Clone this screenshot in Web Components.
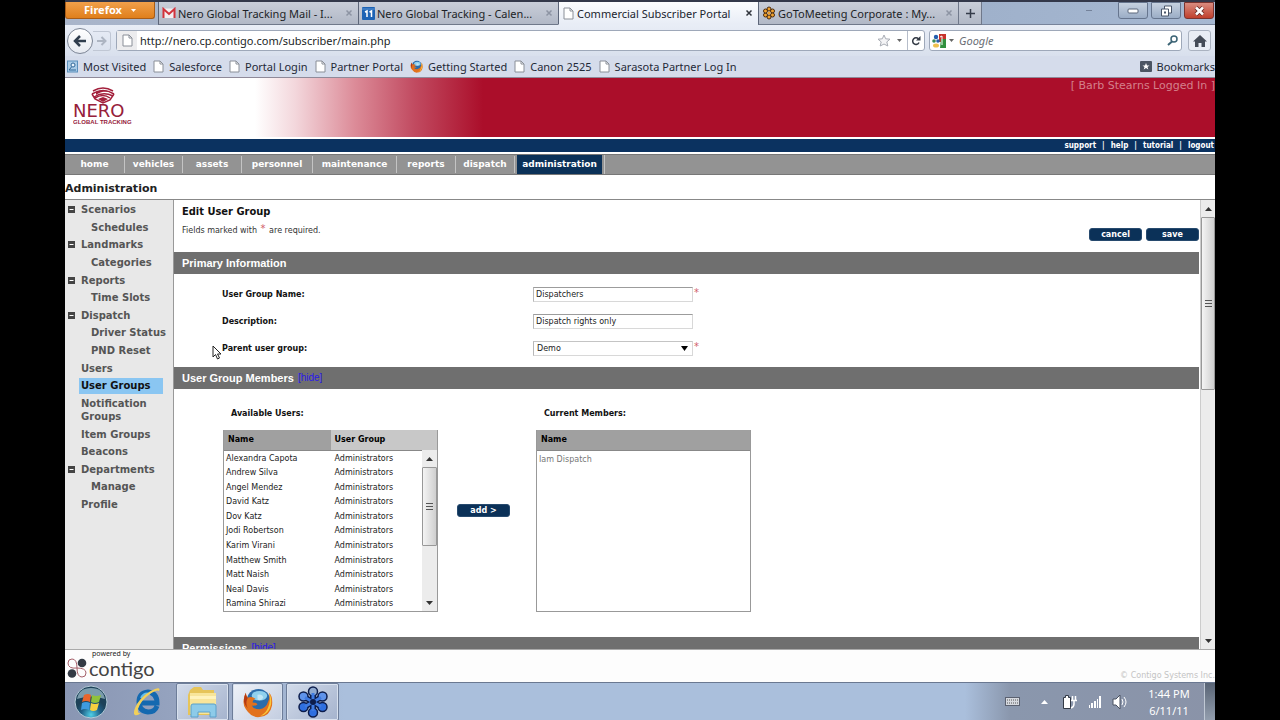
<!DOCTYPE html>
<html lang="en">
<head>
<meta charset="utf-8">
<title>Commercial Subscriber Portal</title>
<style>
html, body { margin: 0; height: 100%; background: #000; }
body { font-family: "Noto Sans", "Open Sans", sans-serif; font-size: 11px; color: #1c1f26; }
</style>
</head>
<body>
<desktop-screen></desktop-screen>

<script>
const icons = {
  page: '<svg width="11" height="13" viewBox="0 0 11 13"><path d="M1 1h6l3 3v8H1z" fill="#fff" stroke="#8a8f98"/><path d="M7 1v3h3" fill="none" stroke="#8a8f98"/></svg>',
  mail: '<svg width="14" height="12" viewBox="0 0 14 12"><path d="M1 1.500h12v9.500H1z" fill="#f3eef0"/><path d="M1.500 11V2L7 7l5.500-5v9" fill="none" stroke="#d2333c" stroke-width="2"/></svg>',
  cal: '<svg width="13" height="13" viewBox="0 0 13 13"><rect width="13" height="13" rx="1" fill="#1c62b4"/><path d="M0 2h13" stroke="#5c95d4"/><path d="M3 5l2-1v6M7.500 5l2-1v6" fill="none" stroke="#fff" stroke-width="1.500"/></svg>',
  flower: '<svg width="14" height="14" viewBox="0 0 14 14"><g fill="#f0a12c" stroke="#4a2b10"><circle cx="7" cy="3" r="2"/><circle cx="10.500" cy="5" r="2"/><circle cx="10.500" cy="9" r="2"/><circle cx="7" cy="11" r="2"/><circle cx="3.500" cy="9" r="2"/><circle cx="3.500" cy="5" r="2"/></g><circle cx="7" cy="7" r="1.500" fill="#f0a12c"/></svg>',
  visited: '<svg width="11" height="13" viewBox="0 0 11 13"><rect x=".5" y="1" width="10" height="11" fill="#a9cbe6" stroke="#5a8fbc"/><circle cx="6" cy="5" r="2" fill="#e9f4fc" stroke="#2d6698"/><path d="M4.500 7L2 10h7" fill="none" stroke="#2d6698"/></svg>',
  firefox: '<svg width="SZ" height="SZ" viewBox="0 0 32 32"><circle cx="17" cy="14" r="12" fill="#2b6cab"/><ellipse cx="18" cy="9" rx="8" ry="5" fill="#8fd0ee"/><path d="M16 8q5-1 6 3-3 4-6 2z" fill="#d6effa" opacity=".7"/><path d="M4 6q-5 10 0 17 6 9 14 8 11-1 13-12 1-9-3-13 1 6-1 9-2 7-9 8-6 0-8-4 3 1 6-1-1-2-5-2 0-3 3-4-4-3-8-1Q4 9 4 6z" fill="#e2711d"/><path d="M28 6q3 5 2 12-2 10-11 12 6-3 8-9 3-7 1-15z" fill="#f8c73c"/><path d="M4 6q0 4 2 5-3 6 0 11-7-7-2-16z" fill="#b63a12"/></svg>',
  bookmarks: '<svg width="12" height="11" viewBox="0 0 12 11"><rect width="12" height="11" rx="1" fill="#4b5563"/><path d="M6 2l1 2.500h2.500l-2 1.500.8 2.500L6 7 3.700 8.500l.8-2.500-2-1.500H5z" fill="#fff"/></svg>'
};
icons.ffsmall = icons.firefox.replace(/SZ/g, '13');

function define(name, render) {
  customElements.define(name, class extends HTMLElement {
    connectedCallback() {
      if (this.shadowRoot) return;
      const template = document.createElement('template');
      template.innerHTML = render(this);
      this.attachShadow({ mode: 'open' }).append(template.content.cloneNode(true));
    }
  });
}
const attr = (el, name) => el.getAttribute(name) || '';

/* ---------- browser window ---------- */
define('browser-tab', el => `
<style>
:host { display: flex; align-items: center; flex: 0 1 200px; min-width: 0; box-sizing: border-box; height: 23px; padding: 0 5px 0 3px; gap: 2px;
  border-left: 1px solid #5d6679; border-bottom: 1px solid #6f788a; background: linear-gradient(#c9ced9, #b1b8c6); }
:host([active]) { padding-left: 4px; gap: 3px; background: linear-gradient(#fbfcfe, #e8edf6); border-bottom-color: #e8edf6; color: #20242e; }
svg { flex: none; }
.title { flex: 1; min-width: 0; white-space: nowrap; overflow: hidden; }
button { border: 0; padding: 0; width: 8px; height: 8px; background: none; display: flex; }
path.x { stroke: #8d94a3; } :host([active]) path.x { stroke: #30343c; }
</style>
${icons[attr(el, 'icon')]}<span class="title"><slot></slot></span>
<button aria-label="Close tab"><svg width="8" height="8" viewBox="0 0 8 8"><path class="x" d="M1.500 1.500l5 5M6.500 1.500l-5 5" stroke-width="1.500"/></svg></button>`);

define('book-mark', el => `
<style>
:host { display: block; flex: none; }
a { display: flex; align-items: center; gap: 5px; color: #1f2937; text-decoration: none; white-space: nowrap; }
</style>
<a href="#">${icons[attr(el, 'icon')]}<span><slot></slot></span></a>`);

define('title-strip', () => `
<style>
:host { display: flex; height: 25px; box-sizing: border-box; border-top: 2px solid #33384a; background: linear-gradient(90deg, #a9b5ca, #9fb1cb 80%, #a6b8d2); }
.menu { flex: none; width: 90px; height: 17px; margin-right: 3px; border: 1px solid #a85c17; border-top: 0; border-radius: 0 0 3px 3px; padding: 0; color: #fff; font: bold 11px/14px "Noto Sans", sans-serif;
  background: linear-gradient(#f0a04b, #e07f1b); display: flex; align-items: center; justify-content: center; gap: 9px; box-sizing: border-box; }
.plus { width: 24px; height: 23px; flex: none; border: 1px solid #6f788a; border-top: 0; background: linear-gradient(#c9ced9, #b1b8c6); padding: 0; display: flex; align-items: center; justify-content: center; }
.space { flex: 1; border-bottom: 1px solid #77839a; display: flex; justify-content: flex-end; gap: 3px; padding-right: 1px; align-items: flex-start; }
.space button { width: 30px; height: 17px; padding: 0; border: 1px solid #66758e; border-radius: 0 0 3px 3px; background: linear-gradient(#c6d1e0, #9badc6); display: flex; align-items: center; justify-content: center; box-sizing: border-box; }
.space .close { background: linear-gradient(#d98c80, #c0402d); border-color: #7b3430; }
.dash { width: 6px; height: 1px; background: #74829a; margin: 8px 23px 0 0; }
</style>
<button class="menu">Firefox <svg width="5" height="3" viewBox="0 0 5 3"><path d="M0 0h5L2.500 3z" fill="#fff"/></svg></button>
<browser-tab icon="mail">Nero Global Tracking Mail - I...</browser-tab>
<browser-tab icon="cal">Nero Global Tracking - Calen...</browser-tab>
<browser-tab icon="page" active>Commercial Subscriber Portal</browser-tab>
<browser-tab icon="flower">GoToMeeting Corporate : My...</browser-tab>
<button class="plus" aria-label="New tab"><svg width="9" height="9" viewBox="0 0 9 9"><path d="M4.500 0v9M0 4.500h9" stroke="#343b49" stroke-width="1.500"/></svg></button>
<div class="space"><span class="dash"></span>
<button aria-label="Minimize"><svg width="12" height="6" viewBox="0 0 12 6"><rect x="1" y="1" width="10" height="4" rx="1" fill="#fff" stroke="#5a667a"/></svg></button>
<button aria-label="Restore"><svg width="13" height="12" viewBox="0 0 13 12"><path d="M4.500 1h7v7h-7z" fill="#fff" stroke="#4a566a"/><path d="M1.500 4h7v7h-7z" fill="#fff" stroke="#4a566a"/><path d="M4 6.500h2v2H4z" fill="#4a566a"/></svg></button>
<button class="close" aria-label="Close"><svg width="11" height="10" viewBox="0 0 11 10"><path d="M2 1.500l7 7M9 1.500l-7 7" stroke="#5e2723" stroke-width="4"/><path d="M2 1.500l7 7M9 1.500l-7 7" stroke="#fff" stroke-width="2.500"/></svg></button>
</div>`);

define('address-bar', () => `
<style>
:host { display: flex; align-items: center; height: 31px; padding: 0 4px 0 2px; background: linear-gradient(#e8edf6, #d9e0ed); }
button { border: 0; background: none; padding: 0; display: flex; flex: none; align-items: center; justify-content: center; }
.back { width: 26px; height: 26px; border-radius: 50%; border: 1px solid #7d8696; background: linear-gradient(#fff, #e6eaf1); }
.forward { width: 18px; height: 20px; border: 1px solid #c0c7d4; border-left: 0; border-radius: 0 3px 3px 0; margin-right: 5px; }
.field { display: flex; align-items: center; height: 21px; box-sizing: border-box; background: #fff; border: 1px solid #9ea8b9; border-radius: 3px; }
.url { flex: 1; min-width: 0; }
.identity { width: 20px; height: 19px; display: flex; align-items: center; justify-content: center; background: #ececee; }
input { border: 0; outline: 0; padding: 0; background: none; flex: 1; min-width: 0; font: 11px "Noto Sans", sans-serif; color: #1c1f26; height: 18px; }
.url input { margin-left: 3px; }
.reload { width: 17px; height: 19px; border-left: 1px solid #b6bdca; }
.search { width: 253px; flex: none; margin: 0 6px 0 4px; gap: 3px; padding: 0 3px 0 2px; box-sizing: border-box; }
.search input { margin-left: 2px; }
.search input::placeholder { font-style: italic; color: #6b6f76; opacity: 1; }
.home { width: 23px; height: 21px; border: 1px solid #aab2c0; border-radius: 3px; background: #e9edf4; }
.star { margin-right: 6px; } .drop { margin-right: 5px; }
</style>
<button class="back" aria-label="Back"><svg width="14" height="12" viewBox="0 0 14 12"><path d="M13 6H3M7 1L2 6l5 5" fill="none" stroke="#2f3d4d" stroke-width="2.500"/></svg></button>
<button class="forward" aria-label="Forward"><svg width="11" height="10" viewBox="0 0 11 10"><path d="M1 5h7M5.500 1L9.500 5l-4 4" fill="none" stroke="#adb5c2" stroke-width="2"/></svg></button>
<div class="field url"><span class="identity">${icons.page}</span>
<input aria-label="Address" value="http://nero.cp.contigo.com/subscriber/main.php">
<button class="star" aria-label="Bookmark this page"><svg width="14" height="13" viewBox="0 0 14 13"><path d="M7 1l1.700 3.800 4.300.4-3.200 2.700 1 4.100L7 10l-3.800 2 1-4.100L1 5.200l4.300-.4z" fill="#f4f4f6" stroke="#a9adb5"/></svg></button>
<svg class="drop" width="5" height="3" viewBox="0 0 5 3"><path d="M0 0h5L2.500 3z" fill="#666"/></svg>
<button class="reload" aria-label="Reload"><svg width="10" height="10" viewBox="0 0 10 10"><path d="M8 6.500A3.300 3.300 0 1 1 7.500 3" fill="none" stroke="#333a45" stroke-width="1.500"/><path d="M9.500 0v4.500H5z" fill="#333a45"/></svg></button></div>
<div class="field search"><svg width="14" height="14" viewBox="0 0 14 14"><path d="M0 0h14v14H0z" fill="#fff"/><path d="M7 0h7v8H7z" fill="#c8342c"/><path d="M9 5h5v9H8z" fill="#31903e"/><circle cx="4" cy="3" r="2.200" fill="#255fae"/><circle cx="2" cy="7" r="1.800" fill="#3a8a5a"/><circle cx="6" cy="7" r="1.800" fill="#255fae"/><ellipse cx="4" cy="11.500" rx="3" ry="2" fill="#efc04e"/><path d="M8 3l2-1v9" fill="none" stroke="#fff" stroke-width="1"/></svg>
<svg width="5" height="3" viewBox="0 0 5 3"><path d="M0 0h5L2.500 3z" fill="#666"/></svg>
<input aria-label="Search" placeholder="Google">
<svg width="11" height="11" viewBox="0 0 11 11"><circle cx="7" cy="4" r="3" fill="none" stroke="#3c6475" stroke-width="1.500"/><path d="M5 6.500L1 10" stroke="#3c6475" stroke-width="2"/></svg></div>
<button class="home" aria-label="Home"><svg width="14" height="12" viewBox="0 0 14 12"><path d="M7 0l7 6.500h-2V12H8.500V8h-3v4H2V6.500H0z" fill="#454c57"/></svg></button>`);

define('bookmarks-bar', () => `
<style>
:host { display: flex; align-items: center; gap: 7px; height: 22px; padding-left: 2px; border-bottom: 1px solid #8f8a99; background: #d5dceb; overflow: hidden; box-sizing: border-box; }
.end { margin-left: auto; }
</style>
<book-mark icon="visited">Most Visited</book-mark><book-mark icon="page">Salesforce</book-mark><book-mark icon="page">Portal Login</book-mark><book-mark icon="page">Partner Portal</book-mark><book-mark icon="ffsmall">Getting Started</book-mark><book-mark icon="page">Canon 2525</book-mark><book-mark icon="page">Sarasota Partner Log In</book-mark>
<book-mark class="end" icon="bookmarks">Bookmarks</book-mark>`);

/* ---------- portal page ---------- */
define('brand-banner', () => `
<style>
:host { display: block; font-family: "DejaVu Sans", sans-serif; }
.banner { display: flex; justify-content: space-between; height: 59px; background: linear-gradient(90deg, #fff 190px, #f3d7dc 230px, #dc8b98 290px, #c14a60 350px, #ab0e2a 418px); }
.logo { margin: 8px 0 0 8px; }
.user { font-size: 11px; line-height: 15px; color: #d4808c; white-space: nowrap; }
.links { display: flex; justify-content: flex-end; align-items: center; height: 13px; margin: 2px 0; gap: 6px; padding-right: 1px; background: #0b3260; color: #fff;
  font: bold 8px/13px "DejaVu Sans Condensed", "DejaVu Sans", sans-serif; }
a { color: #fff; text-decoration: none; }
</style>
<div class="banner">
<svg class="logo" width="64" height="40" viewBox="0 0 64 40" role="img" aria-label="Nero Global Tracking">
<g fill="none" stroke="#a3203c" stroke-width="1.500"><path d="M20 5q10-6 20 0M19 8q11-7 22 0M21 11q9-6 19-1"/><path d="M19 8l3 5 8 4 7-3 4-6M22 12q8-5 15 0"/></g><path d="M23 6q7-4 14 0-8-2-14 3zM25 13l5 3 5-3-5-2z" fill="#a3203c"/>
<text x="0" y="31" font-family="DejaVu Sans, sans-serif" font-size="18" fill="#96203a">NERO</text>
<text x="0" y="38" font-family="Liberation Sans, sans-serif" font-weight="bold" font-size="6" fill="#96203a">GLOBAL TRACKING</text></svg>
<span class="user">[ Barb Stearns Logged In ]</span></div>
<div class="links"><a href="#">support</a><span>|</span><a href="#">help</a><span>|</span><a href="#">tutorial</a><span>|</span><a href="#">logout</a></div>`);

define('main-nav', () => `
<style>
:host { display: block; background: #939393; border-top: 1px solid #777; border-bottom: 1px solid #777; box-sizing: border-box; height: 21px; }
nav { display: grid; grid-template-columns: 60px 58px 59px 71px 84px 59px 59px 90px; height: 19px; }
a { display: flex; align-items: center; justify-content: center; margin: 1px 0; border-right: 1px solid #c4c4c4; color: #fff; text-decoration: none; font: bold 9px/11px "DejaVu Sans", sans-serif; }
.on { margin: 0; } .on span { background: #0b3158; padding: 4px 5px; flex: none; }
</style>
<nav><a href="#">home</a><a href="#">vehicles</a><a href="#">assets</a><a href="#">personnel</a><a href="#">maintenance</a><a href="#">reports</a><a href="#">dispatch</a><a href="#" class="on"><span>administration</span></a></nav>`);

define('side-item', el => `
<style>
:host { display: flex; align-items: flex-start; gap: 3px; padding-left: 2px; }
svg { margin-top: 3px; flex: none; visibility: hidden; } :host([open]) svg { visibility: visible; }
a { display: block; width: 82px; box-sizing: border-box; padding: 1px 0 2px 2px; color: #555; text-decoration: none; font: bold 10px/13px "DejaVu Sans", sans-serif; }
:host([child]) a { padding-left: 12px; white-space: nowrap; }
:host([current]) a { background: #8ac6f2; color: #111; width: 84px; }
</style>
<svg width="9" height="9" viewBox="0 0 9 9"><rect x="1" y="1" width="7" height="7" fill="#444"/><path d="M2.500 4.500h4" stroke="#fff"/></svg><a href="#"><slot></slot></a>`);

define('side-menu', () => `
<style>
:host { display: block; width: 108px; flex: none; background: #e8e8e8; border-right: 1px solid #999; box-sizing: content-box; padding-top: 2px; }
nav { display: flex; flex-direction: column; justify-content: space-between; height: 311px; }
</style>
<nav><side-item open>Scenarios</side-item><side-item child>Schedules</side-item><side-item open>Landmarks</side-item><side-item child>Categories</side-item><side-item open>Reports</side-item><side-item child>Time Slots</side-item><side-item open>Dispatch</side-item><side-item child>Driver Status</side-item><side-item child>PND Reset</side-item><side-item>Users</side-item><side-item current>User Groups</side-item><side-item>Notification Groups</side-item><side-item>Item Groups</side-item><side-item>Beacons</side-item><side-item open>Departments</side-item><side-item child>Manage</side-item><side-item>Profile</side-item></nav>`);

define('push-button', () => `
<style>
:host { display: block; flex: none; }
button { display: block; width: 53px; height: 13px; padding: 0; border: 1px solid #274a6e; border-radius: 3px; background: #0b3158; color: #fff; font: bold 8px/11px "DejaVu Sans", sans-serif; }
</style><button><slot></slot></button>`);

define('section-bar', el => `
<style>
:host { display: flex; align-items: center; gap: 4px; height: 22px; padding-left: 8px; background: #6f6f6f; color: #fff; }
h2 { margin: 0; font: bold 11px/14px "Liberation Sans", sans-serif; }
a { font: 10px/14px "Liberation Sans", sans-serif; color: #2a18e8; text-decoration: none; }
</style><h2><slot></slot></h2>${el.hasAttribute('hide') ? '<a href="#">[hide]</a>' : ''}`);

define('form-row', el => {
  const kind = attr(el, 'kind'), value = attr(el, 'value');
  return `
<style>
:host { display: flex; align-items: center; height: 15px; padding-left: 48px; }
label { width: 311px; flex: none; font: bold 8px/12px "DejaVu Sans", sans-serif; color: #111; }
.box { position: relative; width: 160px; height: 15px; flex: none; }
input, select { appearance: none; display: block; width: 100%; height: 15px; box-sizing: border-box; margin: 0; border: 1px solid #d8d8d8; border-top-color: #9c9c9c; border-left-color: #b8b8b8; border-radius: 0; background: #fff; padding: 0 2px; color: #222; font: 8px/12px "DejaVu Sans", sans-serif; }
select { border-top-color: #c4c4c4; padding: 0 3px; }
svg { position: absolute; right: 4px; top: 5px; pointer-events: none; }
sup { align-self: flex-start; margin-left: 1px; font: 10px/12px "DejaVu Sans", sans-serif; color: #d0606a; }
</style>
<label for="f">${attr(el, 'label')}</label><span class="box">${kind === 'select'
  ? `<select id="f"><option>${value}</option></select><svg width="9" height="5" viewBox="0 0 9 5"><path d="M1 0h7L4.500 5z" fill="#000"/></svg>`
  : `<input id="f" value="${value}">`}</span>${el.hasAttribute('required') ? '<sup>*</sup>' : ''}`;
});

define('scroll-bar', () => `
<style>
:host { display: flex; flex-direction: column; width: 15px; background: #ececec; box-sizing: border-box; }
.arrow { flex: none; height: var(--arrow, 17px); display: flex; align-items: center; justify-content: center; }
.thumb { flex: none; height: var(--thumb, 172px); box-sizing: border-box; border: 1px solid #989898; border-radius: 1px; background: linear-gradient(90deg, #f4f4f4, #cfcfcf); display: flex; align-items: center; justify-content: center; }
.rest { flex: 1; }
</style>
<span class="arrow"><svg width="7" height="4" viewBox="0 0 7 4"><path d="M0 4h7L3.500 0z" fill="#333"/></svg></span>
<span class="thumb"><svg width="7" height="8" viewBox="0 0 7 8"><path d="M0 .5h7M0 3.500h7M0 6.500h7" stroke="#555"/></svg></span><span class="rest"></span>
<span class="arrow"><svg width="7" height="4" viewBox="0 0 7 4"><path d="M0 0h7L3.500 4z" fill="#333"/></svg></span>`);

define('user-table', el => {
  const cols = attr(el, 'columns').split(','), rows = attr(el, 'rows').split(',');
  const two = cols.length > 1;
  return `
<style>
:host { display: block; position: relative; width: 215px; height: 182px; box-sizing: border-box; border: 1px solid #999; border-top: 0; background: #fff; }
table { width: 100%; ${two ? 'height: 100%;' : ''} border-collapse: collapse; table-layout: fixed; font: 8px/12px "DejaVu Sans", sans-serif; color: #222; }
th { height: 20px; padding: 0 0 0 4px; text-align: left; background: #a0a0a0; color: #000; border-bottom: 1px solid #888; }
th + th { background: #c8c8c8; }
td { padding: 1px 0 0 2px; white-space: nowrap; } td + td { padding-left: 4px; } ${two ? '' : 'td { color: #777; height: 15px; }'}
scroll-bar { position: absolute; right: 0; top: 20px; bottom: 0; --thumb: 79px; }
</style>
<table><thead><tr>${cols.map(c => `<th>${c}</th>`).join('')}</tr></thead>
<tbody>${rows.map(r => `<tr><td>${r}</td>${two ? '<td>Administrators</td>' : ''}</tr>`).join('')}</tbody></table>${two ? '<scroll-bar></scroll-bar>' : ''}`;
});

define('group-form', () => `
<style>
:host { display: block; flex: 1; min-width: 0; overflow: hidden; position: relative; background: #fff; font-family: "DejaVu Sans", sans-serif; }
header { display: flex; justify-content: space-between; align-items: flex-end; height: 52px; box-sizing: border-box; padding: 5px 0 11px 8px; }
header > div:first-child { align-self: flex-start; }
h1 { margin: 0 0 6px; font: bold 11px/14px "DejaVu Sans Condensed", "DejaVu Sans", sans-serif; color: #111; }
p { margin: 0; font-size: 8px; line-height: 12px; color: #333; }
p b { font-weight: normal; font-size: 10px; line-height: 1px; color: #d0606a; vertical-align: 1px; padding: 0 1px; }
.actions { display: flex; gap: 4px; }
.fields { display: grid; gap: 12px; padding: 13px 0 11px; }
.members { display: grid; grid-template-columns: 215px 53px 215px; column-gap: 19px; align-items: center; padding: 19px 0 25px 49px; }
.members b { font-size: 8px; line-height: 12px; padding-left: 8px; margin-bottom: 10px; color: #111; }
.cursor { position: absolute; left: 38px; top: 145px; }
.mid { grid-column: 2; margin-bottom: 22px; } .last { grid-column: 3; }
.right { margin-left: 7px; }
</style>
<header><div><h1>Edit User Group</h1><p>Fields marked with <b>*</b> are required.</p></div>
<div class="actions"><push-button>cancel</push-button><push-button>save</push-button></div></header>
<section-bar>Primary Information</section-bar>
<div class="fields"><form-row label="User Group Name:" value="Dispatchers" required></form-row><form-row label="Description:" value="Dispatch rights only"></form-row><form-row label="Parent user group:" kind="select" value="Demo" required></form-row></div>
<section-bar hide>User Group Members</section-bar>
<div class="members"><b>Available Users:</b><b class="last right">Current Members:</b>
<user-table columns="Name,User Group" rows="Alexandra Capota,Andrew Silva,Angel Mendez,David Katz,Dov Katz,Jodi Robertson,Karim Virani,Matthew Smith,Matt Naish,Neal Davis,Ramina Shirazi"></user-table>
<push-button class="mid">add &gt;</push-button>
<user-table class="last right" columns="Name" rows="Iam Dispatch"></user-table></div>
<section-bar hide>Permissions</section-bar>
<svg class="cursor" width="10" height="15" viewBox="0 0 10 15"><path d="M1 1v11l2.500-2.500L5.500 14l2-1-2-4H9z" fill="#fff" stroke="#222"/></svg>`);

define('page-footer', () => `
<style>
:host { display: flex; justify-content: space-between; height: 33px; box-sizing: border-box; border-top: 1px solid #aaa; background: #fdfdfd; overflow: hidden; }
.brand { display: grid; grid-template-columns: 20px auto; grid-template-rows: 8px 22px; column-gap: 2px; padding-left: 2px; }
.by { grid-column: 2; font-size: 7px; line-height: 8px; padding-left: 3px; color: #222; }
.name { font: 20px/20px Lato, sans-serif; color: #444; }
.copy { align-self: flex-end; font: 8px/12px "DejaVu Sans", sans-serif; color: #c4c4c4; white-space: nowrap; }
</style>
<div class="brand"><span class="by">powered by</span>
<svg width="20" height="20" viewBox="0 0 20 20"><circle cx="15" cy="5" r="4.300" fill="#333a44"/><circle cx="5" cy="15.500" r="4.300" fill="#333a44"/><g fill="none" stroke="#a5606a"><path d="M10 10Q1 11 1 5q0-4 4-4 5 0 5 9 0 9 5 9 4 0 4-4 0-5-9-5z"/></g></svg>
<span class="name">contigo</span></div><span class="copy">© Contigo Systems Inc.</span>`);

/* ---------- taskbar ---------- */
define('task-button', () => `
<style>:host { display: block; flex: none; }
button { display: flex; align-items: center; justify-content: center; width: 53px; height: 38px; padding: 0; border: 1px solid #6d7d99; border-radius: 2px; background: linear-gradient(135deg, #d2dbea, #a5b3cd); box-shadow: inset 0 0 0 1px #d8e1ee; }
:host([plain]) button { border: 0; box-shadow: none; background: none; }
:host([active]) button { background: linear-gradient(135deg, #eef2f8, #c3cde0); width: 51px; }</style>
<button><slot></slot></button>`);

define('task-bar', () => `
<style>
:host { display: flex; align-items: stretch; height: 38px; border-top: 1px solid #6a7891; box-sizing: border-box; background: linear-gradient(90deg, #8996b3, #95a3bf 110px, #aabfdc 280px, #aabfdc 900px, #8a97ad 945px, #8a93a8); color: #fff; overflow: hidden; }
.apps { display: flex; gap: 3px; } .apps task-button:first-child { margin-left: -1px; }
.tray { margin-left: auto; display: flex; align-items: center; }
.tray svg { margin-right: 11px; }
.clock { width: 44px; margin: 0 13px 0 8px; text-align: center; font-size: 11px; line-height: 17px; white-space: nowrap; }
.peek { width: 11px; align-self: stretch; padding: 0; border: 0; border-left: 1px solid #c0c8d4; background: linear-gradient(#596475, #939eae); }
.tray .keys { margin-right: 21px; } .tray .more { margin-right: 14px; }
</style>
<div class="apps">
<task-button plain><svg width="34" height="34" viewBox="0 0 34 34" role="img" aria-label="Start"><defs><radialGradient id="orb" cx=".5" cy=".9"><stop offset="0" stop-color="#4fd0e8"/><stop offset=".6" stop-color="#205f86"/><stop offset="1" stop-color="#1c4158"/></radialGradient></defs><circle cx="17" cy="17" r="16" fill="url(#orb)" stroke="#b5cbd8"/><path d="M3 14Q5 3 17 3t14 11Q17 9 3 14z" fill="#b9d9e4" opacity=".6"/><path d="M10 10q4-2 7 0l-1 7q-4-2-8 0z" fill="#e8652b"/><path d="M18 10q4 2 9 0l-2 7q-4 2-8 0z" fill="#8fc23c"/><path d="M8 18q4-2 8 0l-1 7q-4-2-8 0z" fill="#3e9be0"/><path d="M17 18q4 2 8 0l-2 7q-4 2-7 0z" fill="#f7cf3f"/></svg></task-button>
<task-button plain><svg width="32" height="32" viewBox="0 0 32 32" role="img" aria-label="Internet Explorer"><path d="M26 20q-2 6-9 6-9-1-9-10t9-10q9 1 9 11H10" fill="none" stroke="#1469b0" stroke-width="5"/><path d="M10 12q3-6 9-4" fill="none" stroke="#65bdea" stroke-width="2"/><path d="M28 5q2-4-4-2Q13 7 6 18q-5 9-2 11 2 1 6-2-4 1-3-4Q10 14 19 8q7-5 9-3z" fill="#f2d05a"/></svg></task-button>
<task-button><svg width="34" height="32" viewBox="0 0 34 32" role="img" aria-label="Explorer"><path d="M4 4l4-3h7l2 3h11v4l2 2v19H2V9z" fill="#e6c459"/><path d="M4 7h26v21H4z" fill="#f8e59a"/><path d="M4 10h26v3H4z" fill="#fff3bd"/><path d="M5 20q0-2 2-2h21q2 0 2 2v11h-6v-5H12v5H5z" fill="#8dcbe9" stroke="#5aa0ca"/></svg></task-button>
<task-button active>${icons.firefox.replace(/SZ/g, '31')}</task-button>
<task-button><svg width="32" height="32" viewBox="0 0 32 32" role="img" aria-label="GoToMeeting"><path d="M16 8v16M9 12l14 8M23 12L9 20" stroke="#0d1d4c" stroke-width="6"/><g fill="#2f6fe0" stroke="#0d1d4c" stroke-width="1.500"><circle cx="16" cy="5.500" r="4.500" fill="#8fa9cf"/><circle cx="25.500" cy="10.500" r="4.500" fill="#5f93ea"/><circle cx="25.500" cy="21" r="4.500"/><circle cx="16" cy="26.500" r="4.500"/><circle cx="6.500" cy="21" r="4.500"/><circle cx="6.500" cy="10.500" r="4.500" fill="#5f93ea"/></g><path d="M16 7v18M8 11.500l16 9M24 11.500l-16 9" stroke="#3f7be2" stroke-width="3"/><circle cx="16" cy="16" r="3" fill="#0d1d4c"/></svg></task-button>
</div>
<div class="tray">
<svg class="keys" width="15" height="9" viewBox="0 0 15 9"><rect x=".5" y=".5" width="14" height="8" fill="#d6d9df" stroke="#5b6170"/><path d="M2 3h11M2 6h11" stroke="#555" stroke-dasharray="1 1"/></svg>
<svg class="more" width="7" height="4" viewBox="0 0 7 4"><path d="M0 4h7L3.500 0z" fill="#fff"/></svg>
<svg width="15" height="16" viewBox="0 0 15 16"><path d="M1.500 3.500h2V1.500h3v2h2v11h-7z" fill="#fff" stroke="#333a46"/><path d="M10.500 2v4M13.500 2v4M9 6.500h6M12 7v3q0 3-3 4" stroke="#fff" stroke-width="1.500" fill="none"/></svg>
<svg width="13" height="12" viewBox="0 0 13 12"><path d="M1 9h1v3H1zM3 7h2v5H3zM6 5h2v7H6zM9 3h1v9H9zM11 0h2v12h-2z" fill="#fff"/></svg>
<svg width="16" height="16" viewBox="0 0 16 16"><path d="M1 5h3l4-4v14l-4-4H1z" fill="#fff" stroke="#4b5362"/><path d="M10 5q2 3 0 6M12 3q4 5 0 10" fill="none" stroke="#fff"/></svg>
<div class="clock">1:44 PM<br>6/11/11</div>
<button class="peek" aria-label="Show desktop"></button>
</div>`);

define('desktop-screen', () => `
<style>
:host { display: flex; flex-direction: column; height: 100vh; margin: 0 65px; overflow: hidden; background: #fff; }
:host > * { flex: none; }
h1 { margin: 0; height: 25px; box-sizing: border-box; border-bottom: 1px solid #888; font: bold 11px/27px "DejaVu Sans", sans-serif; color: #222; background: #fff; }
.work { flex: 1; min-height: 0; display: flex; overflow: hidden; }
scroll-bar { flex: none; margin-left: 1px; border-left: 1px solid #ccc; --thumb: 173px; --arrow: 17px; }
</style>
<title-strip></title-strip><address-bar></address-bar><bookmarks-bar></bookmarks-bar>
<brand-banner></brand-banner><main-nav></main-nav>
<h1>Administration</h1>
<div class="work"><side-menu></side-menu><group-form></group-form><scroll-bar></scroll-bar></div>
<page-footer></page-footer><task-bar></task-bar>`);
</script>
</body>
</html>
